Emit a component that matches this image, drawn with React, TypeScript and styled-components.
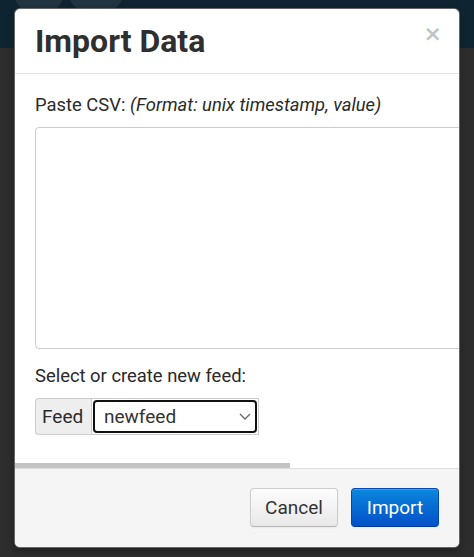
import styled, { createGlobalStyle } from 'styled-components';

const GlobalStyle = createGlobalStyle`
  html, body {
    margin: 0;
    padding: 0;
    background: #2d2d2d;
  }
  * {
    box-sizing: border-box;
  }
`;

const Page = styled.div`
  position: relative;
  width: 474px;
  height: 557px;
  overflow: hidden;
  font-family: Roboto, 'Liberation Sans', sans-serif;
  background: #2d2d2d;
`;

const NavBar = styled.div`
  height: 48px;
  background: #0e2531;
  display: flex;
  gap: 7px;
  padding-left: 15px;
`;

const NavPill = styled.div<{ $w: number }>`
  width: ${(p) => p.$w}px;
  height: 30px;
  margin-top: -20px;
  border-radius: 14px;
  background: #22343f;
`;

const Modal = styled.div`
  position: absolute;
  top: 8px;
  left: 14px;
  width: 446px;
  height: 540px;
  background: #fff;
  border: 1px solid rgba(0, 0, 0, 0.6);
  border-radius: 6px;
  overflow: hidden;
  display: flex;
  flex-direction: column;
  box-shadow: 0 3px 7px rgba(0, 0, 0, 0.3);
`;

const Header = styled.div`
  height: 65px;
  flex-shrink: 0;
  display: flex;
  align-items: center;
  justify-content: space-between;
  padding: 0 17px 0 20px;
  border-bottom: 1px solid #e5e5e5;
`;

const Title = styled.h3`
  margin: 0;
  font-size: 32px;
  font-weight: 700;
  color: #2f2f2f;
`;

const Close = styled.button`
  border: none;
  background: none;
  padding: 0;
  margin-top: -14px;
  font-family: 'DejaVu Sans', sans-serif;
  font-size: 22px;
  font-weight: 700;
  line-height: 1;
  color: #c4c4c4;
  cursor: pointer;
`;

const Body = styled.div`
  height: 389px;
  flex-shrink: 0;
  padding: 20px 20px 0;
  overflow: hidden;
`;

const ScrollTrack = styled.div`
  height: 5px;
  flex-shrink: 0;
  background: #fff;
`;

const ScrollThumb = styled.div`
  height: 100%;
  background: #c3c3c3;
`;

const Label = styled.p`
  margin: 0 0 11px;
  font-size: 18.4px;
  line-height: 22px;
  color: #2a2a2a;

  em {
    font-style: italic;
  }
`;

const CsvArea = styled.textarea`
  display: block;
  width: 676px;
  height: 222px;
  margin: 0 0 16px;
  padding: 6px 8px;
  border: 1px solid #ccc;
  border-radius: 4px;
  resize: none;
  font-family: inherit;
  font-size: 17px;
  outline: none;
`;

const InputGroup = styled.div`
  display: flex;
  width: max-content;
  height: 37px;
`;

const AddOn = styled.span`
  display: flex;
  align-items: center;
  padding: 0 6px;
  width: 56px;
  background: #eee;
  border: 1px solid #ccc;
  border-right: none;
  border-radius: 4px 0 0 4px;
  font-size: 19px;
  color: #2a2a2a;
`;

const SelectBox = styled.div`
  position: relative;
  width: 168px;
  padding: 1px;
  border: 1px solid #ccc;
`;

const Select = styled.select`
  appearance: none;
  width: 100%;
  height: 100%;
  padding: 0 24px 0 9px;
  border: 2.5px solid #111;
  border-radius: 4px;
  background: #fff;
  font-family: inherit;
  font-size: 19px;
  color: #333;
  outline: none;
`;

const Chevron = styled.svg`
  position: absolute;
  right: 7px;
  top: 14px;
  pointer-events: none;
`;

const Footer = styled.div`
  flex: 1;
  display: flex;
  justify-content: flex-end;
  align-items: flex-start;
  gap: 13px;
  padding: 19px 20px 0;
  background: #f5f5f5;
  border-top: 1px solid #ddd;
`;

const Button = styled.button<{ $primary?: boolean }>`
  width: 88px;
  height: 39px;
  border-radius: 4px;
  font-family: inherit;
  font-size: 19px;
  cursor: pointer;
  color: ${(p) => (p.$primary ? '#fff' : '#333')};
  background: ${(p) =>
    p.$primary
      ? 'linear-gradient(to bottom, #0a88dc, #0450c8)'
      : 'linear-gradient(to bottom, #fdfdfd, #e8e8e8)'};
  border: 1px solid ${(p) => (p.$primary ? '#0448b0' : '#cdcdcd')};
  border-bottom-color: ${(p) => (p.$primary ? '#033b96' : '#b5b5b5')};
  box-shadow: inset 0 1px 0 rgba(255, 255, 255, 0.2), 0 1px 2px rgba(0, 0, 0, 0.05);
`;

export default function App() {
  // visible share of the horizontally overflowing body
  const thumbShare = 0.62;

  return (
    <>
      <GlobalStyle />
      <Page>
        <NavBar>
          <NavPill $w={48} />
          <NavPill $w={52} />
        </NavBar>
        <Modal>
          <Header>
            <Title>Import Data</Title>
            <Close>×</Close>
          </Header>
          <Body>
            <Label>
              Paste CSV: <em>(Format: unix timestamp, value)</em>
            </Label>
            <CsvArea />
            <Label>Select or create new feed:</Label>
            <InputGroup>
              <AddOn>Feed</AddOn>
              <SelectBox>
                <Select defaultValue='newfeed'>
                  <option value='newfeed'>newfeed</option>
                </Select>
                <Chevron width='12' height='8' viewBox='0 0 12 8'>
                  <polyline points='1,1 6,6 11,1' fill='none' stroke='#666' strokeWidth='1.3' />
                </Chevron>
              </SelectBox>
            </InputGroup>
          </Body>
          <ScrollTrack>
            <ScrollThumb style={{ width: `${thumbShare * 100}%` }} />
          </ScrollTrack>
          <Footer>
            <Button>Cancel</Button>
            <Button $primary>Import</Button>
          </Footer>
        </Modal>
      </Page>
    </>
  );
}
